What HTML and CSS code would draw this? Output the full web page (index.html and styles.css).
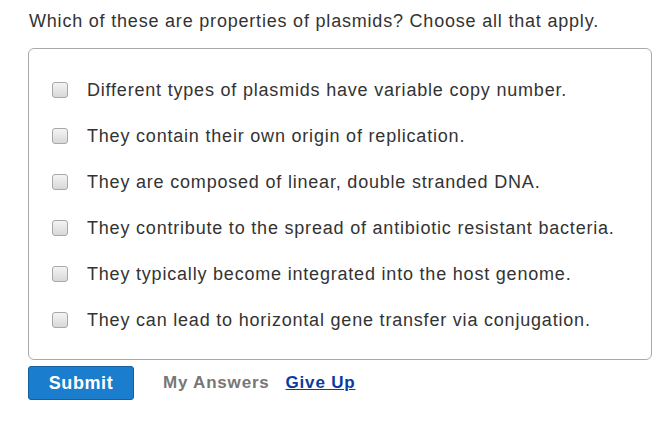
FILE: index.html
```html
<!DOCTYPE html>
<html lang="en">
<head>
    <meta charset="UTF-8">
    <title>Plasmids question</title>
    <link rel="stylesheet" href="styles.css">
</head>
<body>
    <div class="question">
        <p class="prompt">Which of these are properties of plasmids? Choose all that apply.</p>
        <div class="choices">
            <label class="choice"><span class="box"></span>Different types of plasmids have variable copy number.</label>
            <label class="choice"><span class="box"></span>They contain their own origin of replication.</label>
            <label class="choice"><span class="box"></span>They are composed of linear, double stranded DNA.</label>
            <label class="choice"><span class="box"></span>They contribute to the spread of antibiotic resistant bacteria.</label>
            <label class="choice"><span class="box"></span>They typically become integrated into the host genome.</label>
            <label class="choice"><span class="box"></span>They can lead to horizontal gene transfer via conjugation.</label>
        </div>
        <div class="actions">
            <button class="submit">Submit</button>
            <span class="my-answers">My Answers</span>
            <a class="give-up" href="#">Give Up</a>
        </div>
    </div>
</body>
</html>
```

FILE: styles.css
```css
body {
    font-family: 'Liberation Sans', Arial, sans-serif;
    margin: 0;
    background-color: #fff;
    color: #333;
}

.question {
    padding: 11px 11px 0 28px;
}

.prompt {
    margin: 0 0 16px 1px;
    font-size: 18px;
    line-height: 21px;
    letter-spacing: 0.8px;
}

.choices {
    border: 1px solid #aaa;
    border-radius: 6px;
    padding: 18px 20px 16px 23px;
}

.choice {
    display: flex;
    align-items: center;
    height: 46px;
    font-size: 18px;
    letter-spacing: 0.8px;
}

.box {
    width: 14px;
    height: 14px;
    border: 1px solid #a8a8a8;
    border-radius: 3px;
    background: linear-gradient(#f4f4f4, #d8d8d8);
    margin-right: 19px;
    margin-top: -1px;
    flex-shrink: 0;
}

.actions {
    display: flex;
    align-items: center;
    margin-top: 6px;
}

.submit {
    font-family: inherit;
    width: 106px;
    height: 34px;
    background-color: #1b7dce;
    border: 1px solid #14609f;
    border-radius: 3px;
    color: #fff;
    font-size: 18px;
    font-weight: bold;
    letter-spacing: 0.6px;
    cursor: pointer;
}

.my-answers {
    margin-left: 29px;
    font-size: 17px;
    font-weight: bold;
    letter-spacing: 0.8px;
    color: #777;
}

.give-up {
    margin-left: 16px;
    font-size: 17px;
    font-weight: bold;
    letter-spacing: 0.8px;
    color: #0a3ca0;
}
```
